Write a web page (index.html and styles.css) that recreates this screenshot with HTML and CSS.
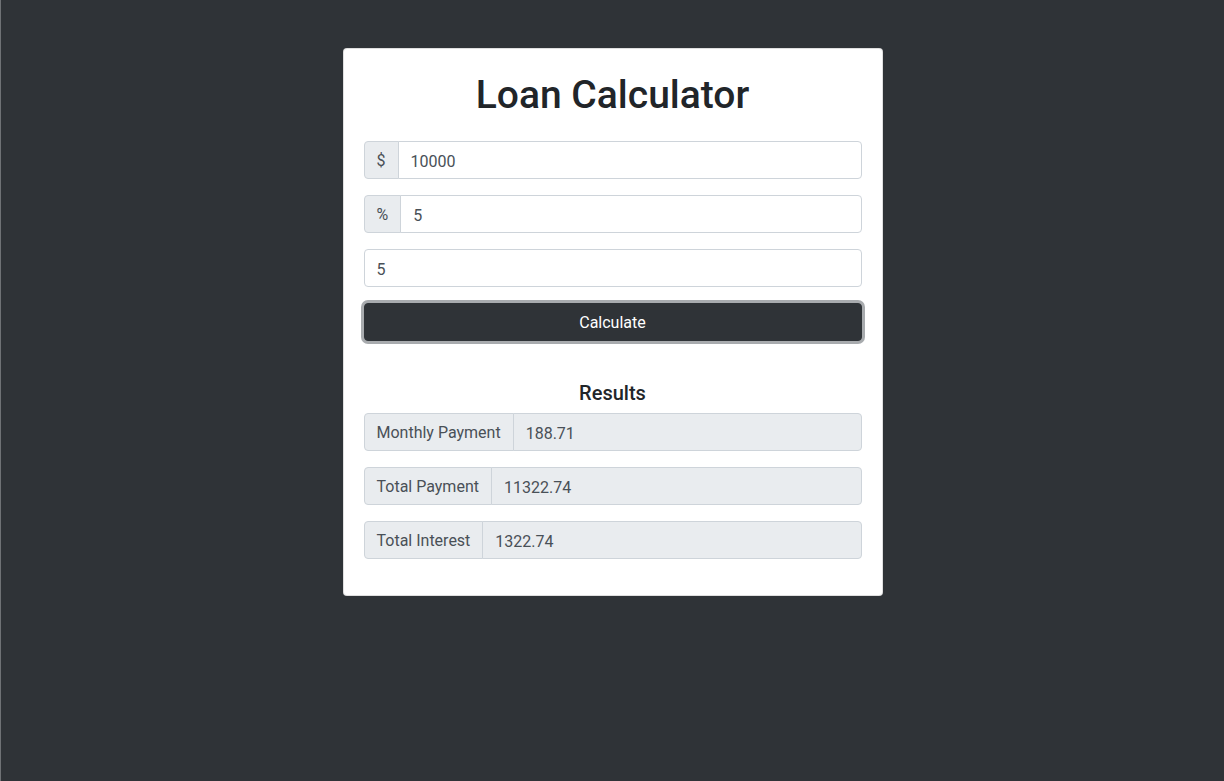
FILE: index.html
```html
<!DOCTYPE html>
<html lang="en">
<head>
<meta charset="utf-8">
<title>Loan Calculator</title>
<link rel="stylesheet" href="styles.css">
</head>
<body>
  <main class="card">
    <h1 class="title">Loan Calculator</h1>
    <div class="group">
      <span class="addon">$</span>
      <input class="field" type="text" value="10000">
    </div>
    <div class="group">
      <span class="addon">%</span>
      <input class="field" type="text" value="5">
    </div>
    <div class="group">
      <input class="field solo" type="text" value="5">
    </div>
    <button class="btn" type="button">Calculate</button>
    <h5 class="results-title">Results</h5>
    <div class="group">
      <span class="addon">Monthly Payment</span>
      <input class="field readonly" type="text" value="188.71" disabled>
    </div>
    <div class="group">
      <span class="addon">Total Payment</span>
      <input class="field readonly" type="text" value="11322.74" disabled>
    </div>
    <div class="group">
      <span class="addon">Total Interest</span>
      <input class="field readonly" type="text" value="1322.74" disabled>
    </div>
  </main>
</body>
</html>
```
FILE: styles.css
```css
* { box-sizing: border-box; }
html, body { height: 100%; }
body {
  margin: 0;
  background: #2f3337;
  border-left: 1px solid #6f7275;
  font-family: Roboto, "Liberation Sans", Arial, sans-serif;
  color: #212529;
  padding-top: 48px;
}
.card {
  width: 540px;
  margin: 0 auto;
  background: #fff;
  border: 1px solid rgba(0,0,0,.125);
  border-radius: 4px;
  padding: 20px;
}
.title {
  margin: 0 0 22px;
  padding-top: 2px;
  font-size: 39px;
  line-height: 48px;
  font-weight: 500;
  text-align: center;
  color: #212529;
}
.group {
  display: flex;
  height: 38px;
  margin-bottom: 16px;
}
.addon {
  display: flex;
  align-items: center;
  padding: 7px 12px 5px;
  background: #e9ecef;
  border: 1px solid #ced4da;
  border-radius: 4px 0 0 4px;
  color: #495057;
  font-size: 16px;
  line-height: 24px;
  white-space: nowrap;
}
.field {
  flex: 1;
  min-width: 0;
  height: 38px;
  margin-left: -1px;
  padding: 7px 12px 5px;
  border: 1px solid #ced4da;
  border-radius: 0 4px 4px 0;
  background: #fff;
  color: #495057;
  font-family: inherit;
  font-size: 16px;
  line-height: 24px;
  outline: none;
}
.field.solo {
  margin-left: 0;
  border-radius: 4px;
}
.field.readonly {
  background: #e9ecef;
  color: #495057;
  -webkit-text-fill-color: #495057;
  opacity: 1;
}
.btn {
  display: block;
  width: 100%;
  height: 38px;
  margin: 0 0 16px;
  padding: 1px 12px 0;
  background: #2f3337;
  border: 1px solid #2f3337;
  border-radius: 4px;
  color: #fff;
  font-family: inherit;
  font-size: 16px;
  line-height: 24px;
  box-shadow: 0 0 0 3px #a8abae;
}
.results-title {
  margin: 40px 0 8px;
  font-size: 20px;
  line-height: 24px;
  font-weight: 500;
  text-align: center;
  color: #212529;
}
```
